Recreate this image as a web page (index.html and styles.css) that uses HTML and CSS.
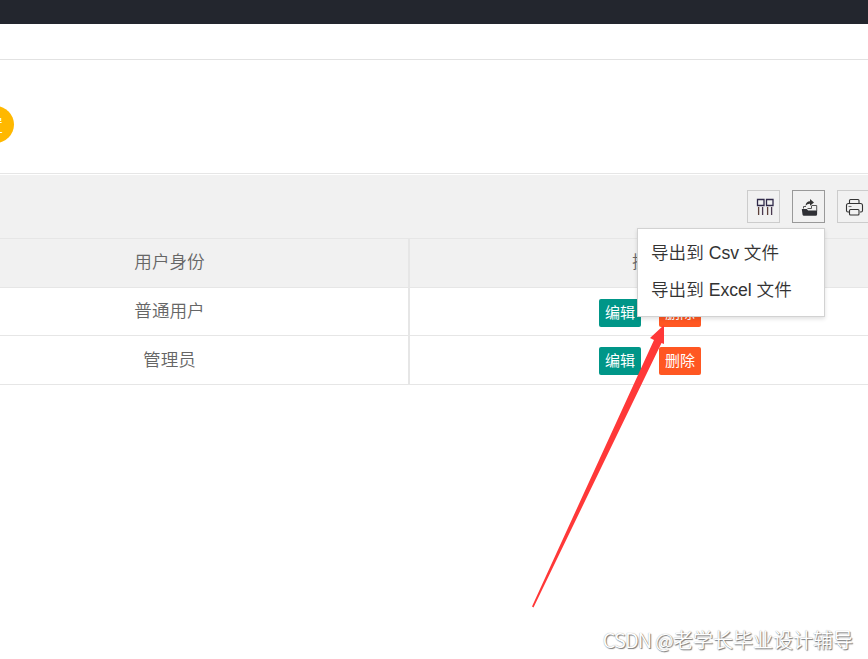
FILE: index.html
```
<!DOCTYPE html>
<html lang="zh-CN">
<head>
    <meta charset="UTF-8">
    <meta name="viewport" content="width=device-width, initial-scale=1.0">
    <title>用户身份</title>
    <link rel="stylesheet" href="styles.css">
</head>
<body>
    <header class="header"></header>
    <div class="tabs"></div>
    <div class="search">
        <button type="button" class="btn-reset">重置</button>
    </div>

    <div class="table-view">
        <div class="toolbar">
            <button type="button" class="tool" title="筛选列">
                <svg width="19" height="19" viewBox="0 0 19 19" fill="none" stroke="#333" stroke-width="1.3">
                    <path d="M3.500 2.500h6.500v6h-6.500zM12.500 2.500h6.500v6h-6.500z" stroke="#302a4a"/>
                    <path d="M4.600 10v8M13.600 10v8" stroke="#5c4038"/>
                    <path d="M8.600 10v8M17.600 10v8" stroke="#4a3a50"/>
                </svg>
            </button>
            <div class="export">
                <button type="button" class="tool active" title="导出">
                    <svg width="19" height="19" viewBox="0 0 19 19">
                        <path d="M2.800 12h5l1.300 1.500h9v3.700q0 1.500-1.500 1.500H5q-1.300 0-1.500-1.300z" fill="#2f3035"/>
                        <path d="M12.500 8.500h5.200v5.500M4.500 11.500V9.500h2.500M8.500 11.500h4V9" fill="none" stroke="#555"/>
                        <path d="M6.500 8.700Q7 4.500 11 4.300V2l4 3.500-4 3.200V6.700Q8.500 6.500 6.500 8.700z" fill="#333"/>
                    </svg>
                </button>
                <ul class="menu">
                    <li>导出到 Csv 文件</li>
                    <li>导出到 Excel 文件</li>
                </ul>
            </div>
            <button type="button" class="tool" title="打印">
                <svg width="19" height="19" viewBox="0 0 19 19" fill="none" stroke="#333" stroke-width="1.100">
                    <path d="M5.500 6.500v-3q0-1 1-1h7.500q1 0 1 1v3"/>
                    <path d="M5 15H4q-1.500 0-1.500-1.500v-5q0-2 2-2h12q2 0 2 2v5q0 1.500-1.500 1.500h-1"/>
                    <rect x="5.500" y="12.500" width="9.500" height="5.500" rx="1"/>
                    <path d="M4.500 9.500h3" stroke="#777"/>
                </svg>
            </button>
        </div>

        <table class="table">
            <thead>
                <tr>
                    <th>用户身份</th>
                    <th>操作</th>
                </tr>
            </thead>
            <tbody>
                <tr>
                    <td>普通用户</td>
                    <td>
                        <div class="actions">
                            <a class="btn edit">编辑</a>
                            <a class="btn delete">删除</a>
                        </div>
                    </td>
                </tr>
                <tr>
                    <td>管理员</td>
                    <td>
                        <div class="actions">
                            <a class="btn edit">编辑</a>
                            <a class="btn delete">删除</a>
                        </div>
                    </td>
                </tr>
            </tbody>
        </table>
    </div>

    <svg class="arrow" width="868" height="659" viewBox="0 0 868 659">
        <path d="M664 325L650 338L654 340L532 606.500L533.500 607.500L661.500 343L664 344z" fill="#ff3838"/>
    </svg>
    <div class="watermark"><span>CSDN @</span>老学长毕业设计辅导</div>
</body>
</html>
```

FILE: styles.css
```
* {
    box-sizing: border-box;
}
body {
    position: relative;
    height: 659px;
    margin: 0;
    overflow: hidden;
    background: #fff;
    color: #666;
    font: 350 17.6px "Liberation Sans", "Noto Sans CJK SC", sans-serif;
}
button {
    padding: 0;
    font: inherit;
}
.header {
    height: 24px;
    background: #23262e;
}
.tabs {
    height: 36px;
    border-bottom: 1px solid #e2e2e2;
}
.search {
    height: 113px;
    padding-top: 46px;
}
.btn-reset {
    display: block;
    width: 80px;
    height: 37px;
    margin-left: -66px;
    padding-right: 11px;
    border: none;
    border-radius: 19px;
    background: #ffb800;
    color: #fff;
    text-align: right;
}
.table-view {
    width: 960px;
    margin-left: -70px;
    border-top: 1px solid #e6e6e6;
}
.toolbar {
    display: flex;
    gap: 12px;
    height: 64px;
    margin-top: 1px;
    padding: 15px 0 0 817px;
    border-bottom: 1px solid #e6e6e6;
    background: #f1f1f1;
}
.tool {
    display: flex;
    flex: none;
    align-items: center;
    justify-content: center;
    width: 33px;
    height: 33px;
    border: 1px solid #ccc;
    background: transparent;
}
.tool svg {
    overflow: visible;
}
.tool.active {
    border-color: #999;
}
.export {
    position: relative;
}
.menu {
    position: absolute;
    top: 38px;
    right: 0;
    z-index: 2;
    width: 188px;
    height: 89px;
    margin: 0;
    padding: 6px 0;
    border: 1px solid #d2d2d2;
    background: #fff;
    box-shadow: 0 2px 4px rgba(0, 0, 0, 0.12);
    color: #333;
    list-style: none;
}
.menu li {
    height: 37px;
    padding-left: 13px;
    line-height: 36px;
    white-space: nowrap;
}
.table {
    width: 960px;
    border-collapse: separate;
    border-spacing: 0;
    table-layout: fixed;
}
.table th,
.table td {
    height: 49px;
    padding: 0 0 0 1px;
    border-right: 2px solid #e6e6e6;
    border-bottom: 1px solid #e6e6e6;
    font-weight: 350;
    text-align: center;
    line-height: 46px;
}
.table th {
    padding-bottom: 2px;
    background: #f1f1f1;
}
.table tbody tr:first-child td {
    height: 48px;
    line-height: 45px;
}
.actions {
    display: flex;
    justify-content: center;
    gap: 18px;
    padding: 2px 0 0 1px;
}
.table .btn {
    width: 42px;
    height: 28px;
    border-radius: 2px;
    color: #fff;
    font-size: 15px;
    font-weight: 400;
    line-height: 27px;
}
.edit {
    background: #009688;
}
.delete {
    background: #ff5722;
}
.arrow {
    position: absolute;
    top: 0;
    left: 0;
    z-index: 3;
}
.watermark {
    position: absolute;
    right: 15px;
    bottom: 4px;
    color: #fff;
    font-family: "Noto Sans CJK SC", sans-serif;
    font-size: 20px;
    line-height: 30px;
    text-shadow: 1px 1px 1px #777, 0 0 1px #999;
}
.watermark span {
    letter-spacing: -0.8px;
}
```
